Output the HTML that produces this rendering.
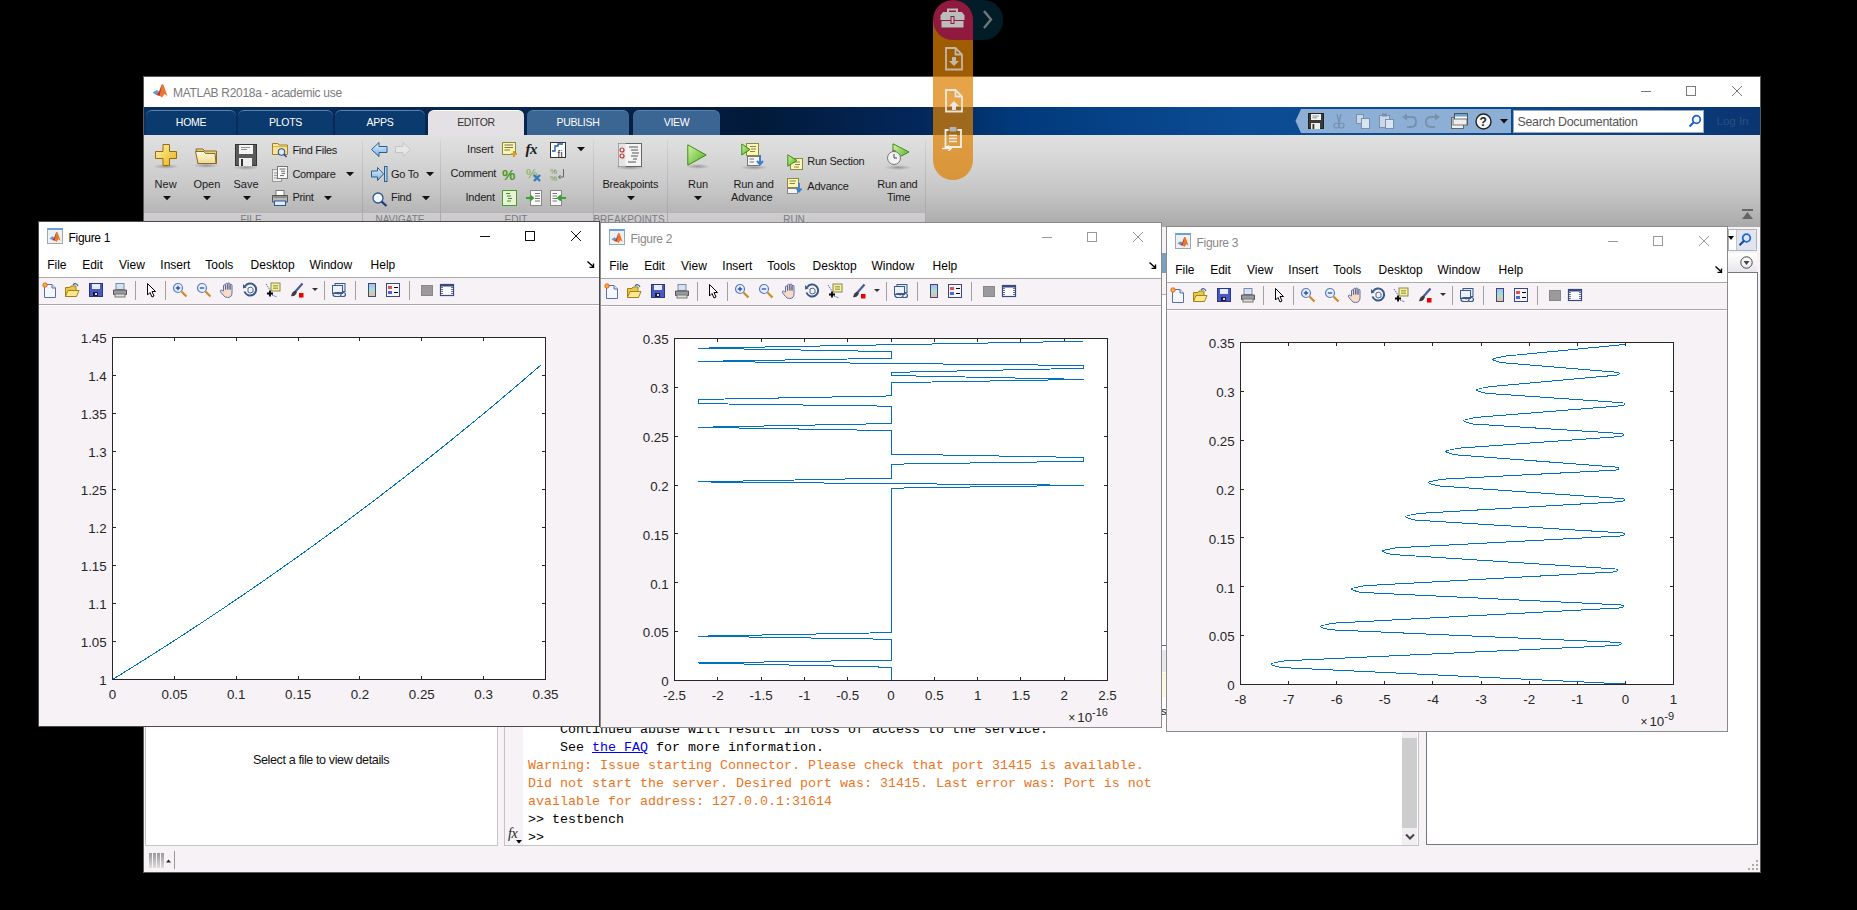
<!DOCTYPE html>
<html><head><meta charset="utf-8">
<style>
*{margin:0;padding:0;box-sizing:border-box}
html,body{width:1857px;height:910px;overflow:hidden;background:#000;font-family:"Liberation Sans",sans-serif;position:relative}
.a{position:absolute;display:block}
.t{position:absolute;white-space:pre;line-height:1}
</style></head><body>

<div class="a" style="left:143px;top:76px;width:1618px;height:797px;background:#f6f2f6;border:1px solid #5a5a5a"></div>
<div class="a" style="left:144px;top:77px;width:1616px;height:30px;background:#fff"></div>
<svg class="a" style="left:152px;top:83px" width="16" height="16" viewBox="0 0 16 16">
<path d="M0.5 9.5 L5 7 L7 8.5 L4 12 Z" fill="#5aa0d8"/>
<path d="M4 12 L7 8.5 L9.5 2 L11 1.5 L8 13 Z" fill="#c0392b"/>
<path d="M9.5 2 Q10.5 0.5 11.5 2 L15.5 13 L12.5 11 L10 14.5 L8 13 Z" fill="#e8762b"/>
</svg>
<div class="t" style="left:173.0px;top:86.8px;font-size:12px;color:#7a7a7a;font-family:'Liberation Sans';letter-spacing:-0.3px">MATLAB R2018a - academic use</div>
<div class="a" style="left:1641px;top:91px;width:10px;height:1px;background:#7a7a7a"></div>
<div class="a" style="left:1686px;top:86px;width:10px;height:10px;border:1px solid #7a7a7a"></div>
<svg class="a" style="left:1732px;top:86px;" width="10" height="10" viewBox="0 0 10 10"><path d="M0 0 L10 10 M10 0 L0 10" stroke="#7a7a7a" stroke-width="1"/></svg>
<div class="a" style="left:144px;top:107px;width:1616px;height:28px;background:linear-gradient(90deg,#0b2f5e 0%,#06244c 25%,#021a3a 38%,#03275a 48%,#013a7c 54%,#0c4c94 68%,#0b4a90 84%,#0a3a78 96%,#0a3570 100%)"></div>
<div class="a" style="left:146px;top:110px;width:90px;height:25px;background:#0b3a6e;border-radius:6px 6px 0 0;border-top:1px solid #5b82ad"></div>
<div class="t" style="left:191.0px;top:117.1px;font-size:10.5px;color:#fff;font-family:'Liberation Sans';transform:translateX(-50%);letter-spacing:-0.3px">HOME</div>
<div class="a" style="left:238px;top:110px;width:95px;height:25px;background:#0b3a6e;border-radius:6px 6px 0 0;border-top:1px solid #5b82ad"></div>
<div class="t" style="left:285.5px;top:117.1px;font-size:10.5px;color:#fff;font-family:'Liberation Sans';transform:translateX(-50%);letter-spacing:-0.3px">PLOTS</div>
<div class="a" style="left:335px;top:110px;width:90px;height:25px;background:#0b3a6e;border-radius:6px 6px 0 0;border-top:1px solid #5b82ad"></div>
<div class="t" style="left:380.0px;top:117.1px;font-size:10.5px;color:#fff;font-family:'Liberation Sans';transform:translateX(-50%);letter-spacing:-0.3px">APPS</div>
<div class="a" style="left:428px;top:110px;width:96px;height:25px;background:#e3e1e4;border-radius:6px 6px 0 0;border-top:1px solid #fff"></div>
<div class="t" style="left:476.0px;top:117.1px;font-size:10.5px;color:#333;font-family:'Liberation Sans';transform:translateX(-50%);letter-spacing:-0.3px">EDITOR</div>
<div class="a" style="left:527px;top:110px;width:102px;height:25px;background:#3b6593;border-radius:6px 6px 0 0;border-top:1px solid #5b82ad"></div>
<div class="t" style="left:578.0px;top:117.1px;font-size:10.5px;color:#fff;font-family:'Liberation Sans';transform:translateX(-50%);letter-spacing:-0.3px">PUBLISH</div>
<div class="a" style="left:633px;top:110px;width:87px;height:25px;background:#3b6593;border-radius:6px 6px 0 0;border-top:1px solid #5b82ad"></div>
<div class="t" style="left:676.5px;top:117.1px;font-size:10.5px;color:#fff;font-family:'Liberation Sans';transform:translateX(-50%);letter-spacing:-0.3px">VIEW</div>
<svg class="a" style="left:1295px;top:109px;" width="216" height="24" viewBox="0 0 216 24"><path d="M0.5 12 L6 0 L216 0 L216 24 L6 24 Z" fill="#8dafd6"/></svg>
<div class="a" style="left:1513px;top:110px;width:191px;height:23px;background:#fff;border:1px solid #9ab"></div>
<div class="t" style="left:1517.5px;top:116.3px;font-size:12.4px;color:#555;font-family:'Liberation Sans';letter-spacing:-0.3px">Search Documentation</div>
<svg class="a" style="left:1688px;top:114px;" width="14" height="14" viewBox="0 0 14 14"><circle cx="8.5" cy="5.5" r="3.8" fill="none" stroke="#1e64c8" stroke-width="1.8"/><path d="M6 8 L1.5 12.5" stroke="#1e64c8" stroke-width="2.2"/></svg>
<div class="t" style="left:1716.5px;top:116.3px;font-size:11.5px;color:#2b4f80;font-family:'Liberation Sans'">Log In</div>
<div class="a" style="left:144px;top:135px;width:1616px;height:92px;background:linear-gradient(180deg,#e2e1e2 0%,#d6d5d6 30%,#c7c6c7 60%,#b6b5b6 85%,#aaa9aa 100%)"></div>
<div class="a" style="left:144px;top:213px;width:781px;height:14px;background:linear-gradient(180deg,#cfcdd0,#c9c7ca)"></div>
<div class="a" style="left:362px;top:140px;width:1px;height:87px;background:linear-gradient(180deg,rgba(170,168,171,0.2),#a9a7aa)"></div>
<div class="a" style="left:440px;top:140px;width:1px;height:87px;background:linear-gradient(180deg,rgba(170,168,171,0.2),#a9a7aa)"></div>
<div class="a" style="left:593px;top:140px;width:1px;height:87px;background:linear-gradient(180deg,rgba(170,168,171,0.2),#a9a7aa)"></div>
<div class="a" style="left:667px;top:140px;width:1px;height:87px;background:linear-gradient(180deg,rgba(170,168,171,0.2),#a9a7aa)"></div>
<div class="a" style="left:925px;top:140px;width:1px;height:87px;background:linear-gradient(180deg,rgba(170,168,171,0.2),#a9a7aa)"></div>
<div class="t" style="left:251.0px;top:215.0px;font-size:10px;color:#7b7b80;font-family:'Liberation Sans';transform:translateX(-50%)">FILE</div>
<div class="t" style="left:400.0px;top:215.0px;font-size:10px;color:#7b7b80;font-family:'Liberation Sans';transform:translateX(-50%)">NAVIGATE</div>
<div class="t" style="left:516.0px;top:215.0px;font-size:10px;color:#7b7b80;font-family:'Liberation Sans';transform:translateX(-50%)">EDIT</div>
<div class="t" style="left:629.0px;top:215.0px;font-size:10px;color:#7b7b80;font-family:'Liberation Sans';transform:translateX(-50%)">BREAKPOINTS</div>
<div class="t" style="left:794.0px;top:215.0px;font-size:10px;color:#7b7b80;font-family:'Liberation Sans';transform:translateX(-50%)">RUN</div>
<div class="a" style="left:1742px;top:209px;width:11px;height:1.5px;background:#666"></div>
<svg class="a" style="left:1742px;top:211px;" width="11" height="8" viewBox="0 0 11 8"><path d="M0 8 L5.5 1 L11 8 Z" fill="#666"/></svg>
<div class="a" style="left:153px;top:164px;width:26px;height:5px;border-radius:50%;background:radial-gradient(ellipse at center,rgba(80,80,80,0.45),rgba(80,80,80,0) 70%)"></div>
<svg class="a" style="left:155px;top:144px;" width="23" height="23" viewBox="0 0 23 23"><defs><linearGradient id="gy" x1="0" y1="0" x2="1" y2="1"><stop offset="0" stop-color="#fff6b0"/><stop offset="1" stop-color="#e8b010"/></linearGradient></defs><path d="M8 0.5 H14.5 V7.5 H21.5 V14.5 H14.5 V21.5 H8 V14.5 H0.5 V7.5 H8 Z" fill="url(#gy)" stroke="#9a6a10" stroke-width="1"/></svg>
<div class="t" style="left:154.6px;top:178.7px;font-size:11px;color:#1b1b1b;font-family:'Liberation Sans'">New</div>
<svg class="a" style="left:163.3px;top:196px;" width="8" height="5" viewBox="0 0 8 5"><path d="M0 0 H8 L4 4.2 Z" fill="#111"/></svg>
<div class="a" style="left:193px;top:163px;width:26px;height:5px;border-radius:50%;background:radial-gradient(ellipse at center,rgba(80,80,80,0.45),rgba(80,80,80,0) 70%)"></div>
<svg class="a" style="left:195px;top:148px;" width="23" height="17" viewBox="0 0 23 17"><defs><linearGradient id="gf" x1="0" y1="0" x2="0" y2="1"><stop offset="0" stop-color="#fffbe0"/><stop offset="1" stop-color="#f0d890"/></linearGradient></defs><path d="M1 1 H8 L9.5 3 H21.5 V15.5 H3 Z" fill="#e8cf80" stroke="#8a6a20"/><path d="M0.5 3.5 H9 L10.5 5.5 H20 L21 15.5 H3 Z" fill="url(#gf)" stroke="#8a6a20"/></svg>
<div class="t" style="left:193.4px;top:178.7px;font-size:11px;color:#1b1b1b;font-family:'Liberation Sans'">Open</div>
<svg class="a" style="left:203.3px;top:196px;" width="8" height="5" viewBox="0 0 8 5"><path d="M0 0 H8 L4 4.2 Z" fill="#111"/></svg>
<div class="a" style="left:233px;top:165px;width:26px;height:5px;border-radius:50%;background:radial-gradient(ellipse at center,rgba(80,80,80,0.45),rgba(80,80,80,0) 70%)"></div>
<svg class="a" style="left:235px;top:144px;" width="22" height="22" viewBox="0 0 22 22"><rect x="0.5" y="0.5" width="21" height="21" fill="#5a5a5a" stroke="#333"/><rect x="4" y="1" width="14" height="9" fill="#f4f4f4"/><path d="M6 3.5 H15 M6 5.5 H12" stroke="#777" stroke-width="0.8"/><rect x="4" y="14" width="13" height="8" fill="#eee"/><rect x="6" y="15" width="2" height="7" fill="#333"/></svg>
<div class="t" style="left:233.5px;top:178.7px;font-size:11px;color:#1b1b1b;font-family:'Liberation Sans'">Save</div>
<svg class="a" style="left:243px;top:196px;" width="8" height="5" viewBox="0 0 8 5"><path d="M0 0 H8 L4 4.2 Z" fill="#111"/></svg>
<svg class="a" style="left:272px;top:142px;" width="16" height="16" viewBox="0 0 16 16"><path d="M0.5 1.5 H6 L7 3 H15.5 V12.5 H0.5 Z" fill="#f6e4a0" stroke="#a8821e"/><rect x="1" y="4" width="14" height="1.2" fill="#e0b840"/><circle cx="9.5" cy="10" r="3.2" fill="#dfe8f8" stroke="#2a5a90" stroke-width="1.1"/><path d="M11.8 12.3 L14.5 15" stroke="#2a4a80" stroke-width="1.6"/></svg>
<div class="t" style="left:292.4px;top:144.6px;font-size:11px;color:#1b1b1b;font-family:'Liberation Sans';letter-spacing:-0.3px">Find Files</div>
<svg class="a" style="left:272px;top:166px;" width="16" height="16" viewBox="0 0 16 16"><rect x="0.5" y="3.5" width="9" height="12" fill="#ececec" stroke="#999"/><path d="M2 7 H6 M2 9.5 H5 M2 12 H6" stroke="#777" stroke-width="0.7"/><rect x="5.5" y="0.5" width="10" height="12" fill="#fbfbfb" stroke="#777"/><path d="M7.5 3 H13.5 M9 5.2 H13 M9.5 7.4 H13 M8 9.6 H12" stroke="#444" stroke-width="0.8"/></svg>
<div class="t" style="left:292.4px;top:168.5px;font-size:11px;color:#1b1b1b;font-family:'Liberation Sans';letter-spacing:-0.3px">Compare</div>
<svg class="a" style="left:346px;top:172px;" width="8" height="5" viewBox="0 0 8 5"><path d="M0 0 H8 L4 4.2 Z" fill="#111"/></svg>
<svg class="a" style="left:272px;top:190px;" width="16" height="16" viewBox="0 0 16 16"><rect x="4" y="0.5" width="8" height="5" fill="#fff" stroke="#777"/><path d="M0.5 5.5 H15.5 V12 H0.5 Z" fill="#b8b8b8" stroke="#555"/><rect x="1.5" y="6" width="13" height="2" fill="#8a8a8a"/><rect x="2.5" y="11" width="11" height="4.5" fill="#e0ecf8" stroke="#2a5a90"/></svg>
<div class="t" style="left:292.4px;top:192.3px;font-size:11px;color:#1b1b1b;font-family:'Liberation Sans';letter-spacing:-0.3px">Print</div>
<svg class="a" style="left:323.6px;top:196px;" width="8" height="5" viewBox="0 0 8 5"><path d="M0 0 H8 L4 4.2 Z" fill="#111"/></svg>
<svg class="a" style="left:371px;top:142px;" width="17" height="15" viewBox="0 0 17 15"><defs><linearGradient id="gb" x1="0" y1="0" x2="0" y2="1"><stop offset="0" stop-color="#e4f0fc"/><stop offset="1" stop-color="#7ab0e0"/></linearGradient></defs><path d="M0.5 7.5 L8 0.5 V4.5 H16 V10.5 H8 V14.5 Z" fill="url(#gb)" stroke="#2a5f8a"/></svg>
<svg class="a" style="left:395px;top:142px;" width="16" height="15" viewBox="0 0 16 15"><path d="M15.5 7.5 L8 0.5 V4.5 H0.5 V10.5 H8 V14.5 Z" fill="#e6e6e6" stroke="#c4c4c4"/></svg>
<svg class="a" style="left:371px;top:166px;" width="17" height="16" viewBox="0 0 17 16"><path d="M12.5 8 L6.5 1.5 V5 H0.5 V11 H6.5 V14.5 Z" fill="url(#gb)" stroke="#2a5f8a"/><rect x="13.5" y="0.5" width="2.5" height="15" fill="#b8d4f0" stroke="#2a5f8a"/></svg>
<div class="t" style="left:391.0px;top:168.5px;font-size:11px;color:#1b1b1b;font-family:'Liberation Sans';letter-spacing:-0.3px">Go To</div>
<svg class="a" style="left:426px;top:172px;" width="8" height="5" viewBox="0 0 8 5"><path d="M0 0 H8 L4 4.2 Z" fill="#111"/></svg>
<svg class="a" style="left:372px;top:192px;" width="16" height="15" viewBox="0 0 16 15"><circle cx="6" cy="6" r="5" fill="#f0f4fa" stroke="#2a5a8a" stroke-width="1.3"/><path d="M9.5 9.5 L14.5 14" stroke="#1a3a6a" stroke-width="2.2"/></svg>
<div class="t" style="left:391.0px;top:192.3px;font-size:11px;color:#1b1b1b;font-family:'Liberation Sans';letter-spacing:-0.3px">Find</div>
<svg class="a" style="left:421.7px;top:196px;" width="8" height="5" viewBox="0 0 8 5"><path d="M0 0 H8 L4 4.2 Z" fill="#111"/></svg>
<div class="t" style="left:467.1px;top:143.5px;font-size:11px;color:#1b1b1b;font-family:'Liberation Sans';letter-spacing:-0.2px">Insert</div>
<div class="t" style="left:450.5px;top:167.7px;font-size:11px;color:#1b1b1b;font-family:'Liberation Sans';letter-spacing:-0.3px">Comment</div>
<div class="t" style="left:465.5px;top:191.9px;font-size:11px;color:#1b1b1b;font-family:'Liberation Sans';letter-spacing:-0.2px">Indent</div>
<svg class="a" style="left:502px;top:142px;" width="16" height="16" viewBox="0 0 16 16"><rect x="0.5" y="0.5" width="13" height="12" fill="#fbf5b8" stroke="#8a8a40"/><path d="M2.5 3 H11 M2.5 5.5 H11 M2.5 8 H8" stroke="#6a6a30" stroke-width="0.9"/><path d="M12 9 V15 M9 12 H15" stroke="#d8a020" stroke-width="2.2"/></svg>
<svg class="a" style="left:525px;top:141px;" width="18" height="17" viewBox="0 0 18 17"><text x="0.5" y="13" font-family="Liberation Serif" font-style="italic" font-weight="bold" font-size="15" fill="#1a1a1a" letter-spacing="-0.5">fx</text></svg>
<svg class="a" style="left:550px;top:142px;" width="16" height="16" viewBox="0 0 16 16"><rect x="0.5" y="0.5" width="15" height="15" fill="#fff" stroke="#333"/><path d="M2 9 H5 V4 H8 V2 H13" fill="none" stroke="#1a5ab0" stroke-width="1.3"/><text x="7.5" y="14.5" font-family="Liberation Sans" font-size="9.5" fill="#111" letter-spacing="0.3" style="font-variant-ligatures:none">fi</text></svg>
<svg class="a" style="left:577px;top:147px;" width="8" height="5" viewBox="0 0 8 5"><path d="M0 0 H8 L4 4.2 Z" fill="#111"/></svg>
<svg class="a" style="left:502px;top:166px;" width="16" height="16" viewBox="0 0 16 16"><text x="0" y="13.5" font-family="Liberation Sans" font-size="15" font-weight="bold" fill="#4a9a20">%</text></svg>
<svg class="a" style="left:526px;top:166px;" width="16" height="16" viewBox="0 0 16 16"><text x="0" y="12" font-family="Liberation Sans" font-size="13" fill="#7ab050">%</text><path d="M8 9 L14 15 M14 9 L8 15" stroke="#3a7ac0" stroke-width="2.4"/></svg>
<svg class="a" style="left:550px;top:166px;" width="16" height="16" viewBox="0 0 16 16"><text x="0" y="8" font-family="Liberation Sans" font-size="8" fill="#6a9a40">%</text><text x="0" y="15" font-family="Liberation Sans" font-size="8" fill="#6a9a40">%</text><path d="M13.5 3 V11 H9 M10.5 9 L8.5 11 L10.5 13" fill="none" stroke="#666" stroke-width="1"/></svg>
<svg class="a" style="left:502px;top:190px;" width="16" height="16" viewBox="0 0 16 16"><rect x="0.5" y="0.5" width="14" height="15" fill="#e8f4d8" stroke="#4a9a30"/><path d="M4 3.5 H8 M5 6 H9 M6 8.5 H10 M5 11 H9" stroke="#3a7a20" stroke-width="0.9"/></svg>
<svg class="a" style="left:526px;top:190px;" width="16" height="16" viewBox="0 0 16 16"><rect x="4.5" y="0.5" width="11" height="15" fill="#fafafa" stroke="#888"/><path d="M9 3.5 H14 M9 6 H14 M9 8.5 H14 M9 11 H14" stroke="#555" stroke-width="0.8"/><path d="M0 8 H6 M4 5.5 L7 8 L4 10.5" fill="none" stroke="#3aa030" stroke-width="2"/></svg>
<svg class="a" style="left:550px;top:190px;" width="16" height="16" viewBox="0 0 16 16"><rect x="0.5" y="0.5" width="11" height="15" fill="#fafafa" stroke="#888"/><path d="M2.5 3.5 H7 M2.5 6 H7 M2.5 8.5 H7 M2.5 11 H7" stroke="#555" stroke-width="0.8"/><path d="M16 8 H9 M11 5.5 L8 8 L11 10.5" fill="none" stroke="#3aa030" stroke-width="2"/></svg>
<div class="a" style="left:615px;top:165px;width:30px;height:5px;border-radius:50%;background:radial-gradient(ellipse at center,rgba(80,80,80,0.45),rgba(80,80,80,0) 70%)"></div>
<svg class="a" style="left:618px;top:143px;" width="24" height="24" viewBox="0 0 24 24"><rect x="0.5" y="0.5" width="23" height="23" fill="#f4f4f4" stroke="#666"/><rect x="0.5" y="0.5" width="7" height="23" fill="#e4e4e4" stroke="none"/><circle cx="4" cy="7" r="2" fill="#fff" stroke="#d03030" stroke-width="1.2"/><circle cx="4" cy="13" r="2" fill="#fff" stroke="#d03030" stroke-width="1.2"/><path d="M11 4 H20 M13 7 H20 M14 10 H21 M13 13 H20 M15 16 H19 M10 19 H18" stroke="#444" stroke-width="0.9"/></svg>
<div class="t" style="left:602.4px;top:179.0px;font-size:11px;color:#1b1b1b;font-family:'Liberation Sans';letter-spacing:-0.2px">Breakpoints</div>
<svg class="a" style="left:627px;top:196px;" width="8" height="5" viewBox="0 0 8 5"><path d="M0 0 H8 L4 4.2 Z" fill="#111"/></svg>
<div class="a" style="left:686px;top:164px;width:24px;height:5px;border-radius:50%;background:radial-gradient(ellipse at center,rgba(80,80,80,0.45),rgba(80,80,80,0) 70%)"></div>
<svg class="a" style="left:687px;top:144px;" width="20" height="22" viewBox="0 0 20 22"><defs><linearGradient id="gg" x1="0" y1="0" x2="1" y2="1"><stop offset="0" stop-color="#d8f4a0"/><stop offset="1" stop-color="#48b020"/></linearGradient></defs><path d="M0.8 0.8 L19.2 11 L0.8 21.2 Z" fill="url(#gg)" stroke="#3a8a18"/></svg>
<div class="t" style="left:688.0px;top:178.7px;font-size:11px;color:#1b1b1b;font-family:'Liberation Sans'">Run</div>
<svg class="a" style="left:694px;top:196px;" width="8" height="5" viewBox="0 0 8 5"><path d="M0 0 H8 L4 4.2 Z" fill="#111"/></svg>
<div class="a" style="left:740px;top:165px;width:28px;height:5px;border-radius:50%;background:radial-gradient(ellipse at center,rgba(80,80,80,0.45),rgba(80,80,80,0) 70%)"></div>
<svg class="a" style="left:741px;top:143px;" width="25" height="24" viewBox="0 0 25 24"><rect x="5.5" y="0.5" width="12" height="12" fill="#fbf5b8" stroke="#8a8a40"/><path d="M9 3.5 H15 M10 6 H15 M9 8.5 H14" stroke="#6a6a30" stroke-width="0.8"/><path d="M0.8 1 L9 6.5 L0.8 12 Z" fill="url(#gg)" stroke="#3a8a18"/><rect x="6.5" y="13.5" width="12" height="9" fill="#f6f6f6" stroke="#777"/><path d="M8.5 16 H13 M8.5 19 H13" stroke="#555" stroke-width="0.8"/><path d="M19 12 V21 M16 18 L19 21.5 L22 18" fill="none" stroke="#3a80d0" stroke-width="2"/></svg>
<div class="t" style="left:733.5px;top:178.7px;font-size:11px;color:#1b1b1b;font-family:'Liberation Sans';letter-spacing:-0.2px">Run and</div>
<div class="t" style="left:731.0px;top:192.4px;font-size:11px;color:#1b1b1b;font-family:'Liberation Sans';letter-spacing:-0.2px">Advance</div>
<svg class="a" style="left:787px;top:154px;" width="16" height="16" viewBox="0 0 16 16"><rect x="3.5" y="4.5" width="12" height="11" fill="#fbf5b8" stroke="#8a8a40"/><path d="M7 8 H13 M8 10.5 H13 M7 13 H12" stroke="#6a6a30" stroke-width="0.8"/><path d="M0.8 0.8 L10 6.5 L0.8 12.2 Z" fill="url(#gg)" stroke="#3a8a18"/></svg>
<div class="t" style="left:807.3px;top:156.4px;font-size:11px;color:#1b1b1b;font-family:'Liberation Sans';letter-spacing:-0.25px">Run Section</div>
<svg class="a" style="left:787px;top:178px;" width="16" height="16" viewBox="0 0 16 16"><rect x="0.5" y="0.5" width="11" height="9" fill="#fbf5b8" stroke="#8a8a40"/><path d="M2.5 3 H9 M2.5 5.5 H8" stroke="#6a6a30" stroke-width="0.8"/><rect x="0.5" y="10.5" width="10" height="5" fill="#f4f4f4" stroke="#888"/><path d="M12 5 V13 M9.5 10.5 L12 13.5 L14.5 10.5" fill="none" stroke="#3a80d0" stroke-width="1.8"/></svg>
<div class="t" style="left:807.3px;top:180.7px;font-size:11px;color:#1b1b1b;font-family:'Liberation Sans';letter-spacing:-0.2px">Advance</div>
<div class="a" style="left:884px;top:165px;width:28px;height:5px;border-radius:50%;background:radial-gradient(ellipse at center,rgba(80,80,80,0.45),rgba(80,80,80,0) 70%)"></div>
<svg class="a" style="left:886px;top:143px;" width="24" height="24" viewBox="0 0 24 24"><path d="M7 0.8 L23 9 L7 17.2 Z" fill="url(#gg)" stroke="#3a8a18"/><circle cx="8" cy="15" r="6.5" fill="#f2f2f2" stroke="#777" stroke-width="1"/><path d="M8 11 V15 H11" fill="none" stroke="#444" stroke-width="1"/><rect x="6.5" y="7" width="3" height="2" fill="#777"/></svg>
<div class="t" style="left:877.3px;top:178.7px;font-size:11px;color:#1b1b1b;font-family:'Liberation Sans';letter-spacing:-0.2px">Run and</div>
<div class="t" style="left:887.0px;top:192.4px;font-size:11px;color:#1b1b1b;font-family:'Liberation Sans';letter-spacing:-0.2px">Time</div>
<svg class="a" style="left:1308px;top:113px;" width="16" height="16" viewBox="0 0 16 16"><rect x="0.5" y="0.5" width="15" height="15" fill="#3a3a3a" stroke="#222"/><rect x="3" y="1" width="10" height="6" fill="#f4f4f4"/><path d="M4.5 3 H11 M4.5 4.8 H9" stroke="#666" stroke-width="0.7"/><rect x="3" y="10" width="9" height="6" fill="#eee"/><rect x="4.5" y="11" width="1.8" height="5" fill="#333"/></svg>
<svg class="a" style="left:1331px;top:113px;" width="16" height="16" viewBox="0 0 16 16"><path d="M6 1 L8 10 M10 1 L8 10" stroke="#7890aa" stroke-width="1.2"/><circle cx="5.5" cy="12.5" r="2.5" fill="none" stroke="#7890aa" stroke-width="1.2"/><circle cx="10.5" cy="12.5" r="2.5" fill="none" stroke="#7890aa" stroke-width="1.2"/></svg>
<svg class="a" style="left:1355px;top:113px;" width="16" height="16" viewBox="0 0 16 16"><rect x="1.5" y="1.5" width="7" height="9" fill="#c8d8e8" stroke="#7890aa"/><rect x="6.5" y="5.5" width="8" height="10" fill="#d8e4f0" stroke="#7890aa"/></svg>
<svg class="a" style="left:1378px;top:113px;" width="17" height="16" viewBox="0 0 17 16"><rect x="1.5" y="2.5" width="10" height="12" fill="#c8d8e8" stroke="#7890aa"/><rect x="4" y="0.5" width="5" height="3" fill="#7890aa"/><rect x="7.5" y="6.5" width="8" height="9" fill="#d8e4f0" stroke="#7890aa"/></svg>
<svg class="a" style="left:1401px;top:113px;" width="17" height="16" viewBox="0 0 17 16"><path d="M5 4 H11 Q15 4 15 9 Q15 14 10 14 H6" fill="none" stroke="#7890aa" stroke-width="1.8"/><path d="M1 4 L6 0.5 V7.5 Z" fill="#7890aa"/></svg>
<svg class="a" style="left:1424px;top:113px;" width="17" height="16" viewBox="0 0 17 16"><path d="M12 4 H6 Q2 4 2 9 Q2 14 7 14 H11" fill="none" stroke="#7890aa" stroke-width="1.8"/><path d="M16 4 L11 0.5 V7.5 Z" fill="#7890aa"/></svg>
<svg class="a" style="left:1451px;top:113px;" width="17" height="16" viewBox="0 0 17 16"><rect x="0.5" y="4.5" width="12" height="11" fill="#f0f0f0" stroke="#666"/><rect x="3.5" y="0.5" width="13" height="11" fill="#fafafa" stroke="#555"/><rect x="4" y="1" width="12" height="2.5" fill="#6aa0d8"/><rect x="2" y="6" width="14" height="6" fill="#eee" stroke="#555" stroke-width="0.8"/></svg>
<svg class="a" style="left:1475px;top:113px;" width="17" height="17" viewBox="0 0 17 17"><circle cx="8.5" cy="8.5" r="7.5" fill="#f4f6fa" stroke="#222" stroke-width="1.4"/><text x="4.5" y="13" font-family="Liberation Sans" font-weight="bold" font-size="12" fill="#222">?</text></svg>
<svg class="a" style="left:1500px;top:119px;" width="8" height="5" viewBox="0 0 8 5"><path d="M0 0 H8 L4 4.5 Z" fill="#111"/></svg>
<div class="a" style="left:145px;top:600px;width:353px;height:246px;background:#fff;border:1px solid #c4c4c6"></div>
<div class="t" style="left:253.0px;top:754.1px;font-size:12.6px;color:#111;font-family:'Liberation Sans';letter-spacing:-0.4px">Select a file to view details</div>
<div class="a" style="left:504px;top:600px;width:915px;height:246px;background:#fff;border:1px solid #c4c4c6"></div>
<div class="a" style="left:505px;top:600px;width:18px;height:245px;background:#f6f2f6"></div>
<div class="a" style="left:1402px;top:732px;width:15px;height:113px;background:#f0eef1"></div>
<div class="a" style="left:1402px;top:738px;width:15px;height:90px;background:#cdcdcd"></div>
<svg class="a" style="left:1405px;top:833px;" width="10" height="8" viewBox="0 0 10 8"><path d="M1 1.5 L5 5.5 L9 1.5" fill="none" stroke="#444" stroke-width="2"/></svg>
<div class="a" style="left:1426px;top:272px;width:332px;height:573px;background:#fff;border:1px solid #76767e"></div>
<svg class="a" style="left:148px;top:853px;" width="24" height="16" viewBox="0 0 24 16"><defs><linearGradient id="sb" x1="0" y1="0" x2="0" y2="1"><stop offset="0" stop-color="#999"/><stop offset="1" stop-color="#ddd"/></linearGradient></defs><rect x="1" y="0" width="3" height="15" fill="url(#sb)"/><rect x="5" y="0" width="3" height="15" fill="url(#sb)"/><rect x="9" y="0" width="3" height="15" fill="url(#sb)"/><rect x="13" y="0" width="3" height="15" fill="url(#sb)"/><path d="M18 9.5 L20.5 6.5 L23 9.5 Z" fill="#222"/></svg>
<div class="a" style="left:174px;top:851px;width:1px;height:18px;background:#999"></div>
<div class="a" style="left:1756px;top:860px;width:2px;height:2px;background:#a9a99c"></div>
<div class="a" style="left:1752px;top:864px;width:2px;height:2px;background:#a9a99c"></div>
<div class="a" style="left:1756px;top:864px;width:2px;height:2px;background:#a9a99c"></div>
<div class="a" style="left:1748px;top:868px;width:2px;height:2px;background:#a9a99c"></div>
<div class="a" style="left:1752px;top:868px;width:2px;height:2px;background:#a9a99c"></div>
<div class="a" style="left:1756px;top:868px;width:2px;height:2px;background:#a9a99c"></div>
<div class="t" style="left:528.0px;top:722.7px;font-size:13.33px;color:#000;font-family:'Liberation Mono'">    Continued abuse will result in loss of access to the service.</div>
<div class="t" style="left:528px;top:740.7px;font-size:13.33px;font-family:'Liberation Mono';color:#000">    See <span style="color:#0000ee;text-decoration:underline">the FAQ</span> for more information.</div>
<div class="t" style="left:528.0px;top:758.7px;font-size:13.33px;color:#ec7422;font-family:'Liberation Mono'">Warning: Issue starting Connector. Please check that port 31415 is available.</div>
<div class="t" style="left:528.0px;top:776.7px;font-size:13.33px;color:#ec7422;font-family:'Liberation Mono'">Did not start the server. Desired port was: 31415. Last error was: Port is not</div>
<div class="t" style="left:528.0px;top:794.7px;font-size:13.33px;color:#ec7422;font-family:'Liberation Mono'">available for address: 127.0.0.1:31614</div>
<div class="t" style="left:528.0px;top:812.7px;font-size:13.33px;color:#000;font-family:'Liberation Mono'">&gt;&gt; testbench</div>
<div class="t" style="left:528.0px;top:830.7px;font-size:13.33px;color:#000;font-family:'Liberation Mono'">&gt;&gt;</div>
<div class="t" style="left:508.0px;top:827.1px;font-size:14px;color:#222;font-family:'Liberation Serif';font-style:italic;letter-spacing:-0.5px">fx</div>
<svg class="a" style="left:516px;top:840px;" width="6" height="4" viewBox="0 0 6 4"><path d="M0 0 L6 0 L3 3.5 Z" fill="#000"/></svg>
<div class="a" style="left:1162px;top:227px;width:4px;height:505px;background:#fff"></div>
<div class="a" style="left:1162px;top:227px;width:4px;height:67px;background:#f6f2f6"></div>
<div class="a" style="left:1162px;top:253px;width:4px;height:20px;background:#7d9ec4"></div>
<div class="a" style="left:1162px;top:294px;width:4px;height:1px;background:#b0b0b0"></div>
<div class="a" style="left:1162px;top:645px;width:4px;height:1px;background:#3a6aa8"></div>
<div class="a" style="left:1162px;top:650px;width:4px;height:22px;background:#e8e8ea"></div>
<div class="a" style="left:1162px;top:673px;width:4px;height:24px;background:#fbf8e0"></div>
<div class="a" style="left:1162px;top:700px;width:4px;height:20px;overflow:hidden"><div class="t" style="left:-1px;top:6px;font-size:11px;color:#111">s</div></div>
<div class="a" style="left:1728px;top:229px;width:29px;height:22px;background:#fff;border:1px solid #b0b0b8"></div>
<div class="a" style="left:1736px;top:230px;width:20px;height:20px;background:#dfe4f0;border-left:1px solid #c0c4d0;border-radius:0 3px 3px 0"></div>
<svg class="a" style="left:1737px;top:232px;" width="16" height="16" viewBox="0 0 16 16"><circle cx="9.5" cy="6" r="3.8" fill="none" stroke="#1e6ad0" stroke-width="1.8"/><path d="M7 8.8 L2.5 13.2" stroke="#1e4a90" stroke-width="2.2"/></svg>
<svg class="a" style="left:1728px;top:236px;" width="6" height="5" viewBox="0 0 6 5"><path d="M0 0 H6 L3 4 Z" fill="#000"/></svg>
<div class="a" style="left:1728px;top:253px;width:29px;height:19px;background:linear-gradient(180deg,#fff,#e8e6ea)"></div>
<svg class="a" style="left:1740px;top:256px;" width="13" height="13" viewBox="0 0 13 13"><circle cx="6.5" cy="6.5" r="5.7" fill="none" stroke="#444" stroke-width="1"/><path d="M3.5 5 H9.5 L6.5 9 Z" fill="#444"/></svg>
<div class="a" style="left:600px;top:222px;width:562px;height:506px;background:#f6f2f6;border:1px solid #8a8a8a"></div>
<div class="a" style="left:601px;top:223px;width:560px;height:55px;background:#fff"></div>
<div class="a" style="left:601px;top:278px;width:560px;height:1px;background:#a8a8a8"></div>
<div class="a" style="left:601px;top:305px;width:560px;height:1px;background:#a8a8a8"></div>
<div class="a" style="left:601px;top:306px;width:560px;height:1px;background:#fff"></div>
<div class="a" style="left:609px;top:229px;width:16px;height:16px;background:#eef0f4;border:1px solid #9aa;border-top:2px solid #6aa0d8"></div>
<svg class="a" style="left:611px;top:232px" width="12" height="12" viewBox="0 0 16 16">
<path d="M0.5 9.5 L5 7 L7 8.5 L4 12 Z" fill="#5aa0d8"/>
<path d="M4 12 L7 8.5 L9.5 2 L11 1.5 L8 13 Z" fill="#c0392b"/>
<path d="M9.5 2 Q10.5 0.5 11.5 2 L15.5 13 L12.5 11 L10 14.5 L8 13 Z" fill="#e8762b"/>
</svg>
<div class="t" style="left:630.5px;top:232.6px;font-size:12px;color:#888;font-family:'Liberation Sans';letter-spacing:-0.3px">Figure 2</div>
<div class="a" style="left:1042px;top:237px;width:10px;height:1px;background:#999"></div>
<div class="a" style="left:1087px;top:232px;width:10px;height:10px;border:1px solid #999"></div>
<svg class="a" style="left:1133px;top:232px;" width="10" height="10" viewBox="0 0 10 10"><path d="M0 0 L10 10 M10 0 L0 10" stroke="#999" stroke-width="1"/></svg>
<div class="t" style="left:609.2px;top:259.6px;font-size:12px;color:#000;font-family:'Liberation Sans'">File</div>
<div class="t" style="left:644.2px;top:259.6px;font-size:12px;color:#000;font-family:'Liberation Sans'">Edit</div>
<div class="t" style="left:681.0px;top:259.6px;font-size:12px;color:#000;font-family:'Liberation Sans'">View</div>
<div class="t" style="left:722.3px;top:259.6px;font-size:12px;color:#000;font-family:'Liberation Sans'">Insert</div>
<div class="t" style="left:767.3px;top:259.6px;font-size:12px;color:#000;font-family:'Liberation Sans'">Tools</div>
<div class="t" style="left:812.6px;top:259.6px;font-size:12px;color:#000;font-family:'Liberation Sans'">Desktop</div>
<div class="t" style="left:871.4px;top:259.6px;font-size:12px;color:#000;font-family:'Liberation Sans'">Window</div>
<div class="t" style="left:932.6px;top:259.6px;font-size:12px;color:#000;font-family:'Liberation Sans'">Help</div>
<svg class="a" style="left:1149px;top:262px;" width="8" height="7" viewBox="0 0 8 7"><path d="M0.5 0.5 L6.5 6 M6.5 2.5 V6.5 H2.5" stroke="#000" stroke-width="1.4" fill="none"/></svg>
<svg class="a" style="left:604px;top:283px;" width="16" height="16" viewBox="0 0 16 16"><path d="M2.5 2.5 H10 L13.5 6 V15.5 H2.5 Z" fill="#f4f8ff" stroke="#5a6ea8"/><path d="M10 2.5 V6 H13.5" fill="#dfe6f5" stroke="#5a6ea8"/><circle cx="3" cy="3" r="2.2" fill="#ffb030" stroke="#e05010" stroke-width="0.8"/></svg>
<svg class="a" style="left:626px;top:283px;" width="16" height="16" viewBox="0 0 16 16"><path d="M1.5 5.5 H6 L7 4 H12 V14.5 H1.5 Z" fill="#e8c848" stroke="#a88018"/><path d="M1.5 14.5 L4 8.5 H15 L12.5 14.5 Z" fill="#fce890" stroke="#a88018"/><path d="M9 3 Q12 0 14 4" fill="none" stroke="#3060a0" stroke-width="1.2"/></svg>
<svg class="a" style="left:650px;top:283px;" width="16" height="16" viewBox="0 0 16 16"><rect x="1.5" y="1.5" width="13" height="13" fill="#4a58c0" stroke="#2a3488"/><rect x="4" y="2" width="8" height="5" fill="#e8ecff"/><rect x="5" y="10" width="5" height="4" fill="#1a1a3a"/><rect x="7" y="11" width="2" height="2" fill="#ddd"/></svg>
<svg class="a" style="left:674px;top:283px;" width="16" height="16" viewBox="0 0 16 16"><rect x="4" y="1.5" width="8" height="6" fill="#cfe4f8" stroke="#889"/><path d="M1.5 8 H14.5 V12.5 H1.5 Z" fill="#9a9a9a" stroke="#555"/><rect x="3" y="12" width="10" height="3" fill="#ddd" stroke="#777"/></svg>
<div class="a" style="left:697px;top:282px;width:1px;height:19px;background:#a0a0a0"></div>
<svg class="a" style="left:705px;top:283px;" width="16" height="16" viewBox="0 0 16 16"><path d="M4.5 1.5 V13 L7 10.5 L9 15 L11 14 L9 9.5 H12.5 Z" fill="#fff" stroke="#000" stroke-width="1"/></svg>
<div class="a" style="left:727px;top:282px;width:1px;height:19px;background:#a0a0a0"></div>
<svg class="a" style="left:734px;top:283px;" width="16" height="16" viewBox="0 0 16 16"><circle cx="6" cy="6" r="4.5" fill="#e6f0ff" stroke="#5a7ac8" stroke-width="1.2"/><path d="M3.8 6 H8.2 M6 3.8 V8.2" stroke="#3050a0" stroke-width="1.3"/><path d="M9.5 9.5 L14.5 14.5" stroke="#d08a20" stroke-width="2.2"/></svg>
<svg class="a" style="left:758px;top:283px;" width="16" height="16" viewBox="0 0 16 16"><circle cx="6" cy="6" r="4.5" fill="#e6f0ff" stroke="#5a7ac8" stroke-width="1.2"/><path d="M3.8 6 H8.2" stroke="#3050a0" stroke-width="1.3"/><path d="M9.5 9.5 L14.5 14.5" stroke="#d08a20" stroke-width="2.2"/></svg>
<svg class="a" style="left:781px;top:283px;" width="16" height="16" viewBox="0 0 16 16"><path d="M4.5 9 V4 Q4.5 2.8 5.6 2.8 Q6.6 2.8 6.6 4 V7.5 V2.5 Q6.6 1.2 7.7 1.2 Q8.8 1.2 8.8 2.5 V7.5 V2.2 Q8.8 1 9.9 1 Q11 1 11 2.2 V7.5 V3.5 Q11 2.4 12 2.4 Q13 2.4 13 3.5 V10.5 Q13 15.5 8.5 15.5 Q6 15.5 4.5 13.5 L1.5 9.8 Q0.8 8.8 1.8 8.2 Q2.8 7.8 3.6 8.8 Z" fill="#f6dcc4" stroke="#5060a0" stroke-width="0.9"/></svg>
<svg class="a" style="left:804px;top:283px;" width="16" height="16" viewBox="0 0 16 16"><path d="M3 4.5 A6 6 0 1 1 2.5 9.5" fill="none" stroke="#3a5a8a" stroke-width="2"/><path d="M1 2 L4.5 5.5 L1 6.5 Z" fill="#3a5a8a"/><path d="M6 6 L9 5 L11 6.5 V10 L8 11 L6 10 Z" fill="none" stroke="#3a5a8a" stroke-width="0.9"/></svg>
<svg class="a" style="left:827px;top:283px;" width="16" height="16" viewBox="0 0 16 16"><rect x="6" y="1" width="9" height="8" fill="#f6f0a0" stroke="#8a8a4a"/><path d="M8 3.5 H13 M8 5 H13 M8 6.5 H13" stroke="#8a8a4a" stroke-width="0.7"/><path d="M1 2 L5 8 M7 13 L12 15" stroke="#2030c0" stroke-width="0.8" stroke-dasharray="1.5 1"/><path d="M2 11.5 H8 M5 8.5 V14.5" stroke="#000" stroke-width="1.8"/></svg>
<svg class="a" style="left:851px;top:283px;" width="16" height="16" viewBox="0 0 16 16"><path d="M13.5 1.5 L6 10" stroke="#4a5aa0" stroke-width="2.2"/><path d="M6.5 9 Q3 9.5 2.5 14 Q6.5 14 7.5 10.5 Z" fill="#444" stroke="#222" stroke-width="0.6"/><rect x="10" y="11" width="4.5" height="4.5" fill="#ee0000"/></svg>
<svg class="a" style="left:873px;top:283px;" width="8" height="16" viewBox="0 0 8 16"><path d="M1 6 H7 L4 9 Z" fill="#333"/></svg>
<div class="a" style="left:886px;top:282px;width:1px;height:19px;background:#a0a0a0"></div>
<svg class="a" style="left:893px;top:283px;" width="16" height="16" viewBox="0 0 16 16"><rect x="4" y="1.5" width="10" height="8" fill="#dfe8f4" stroke="#3a5a8a"/><rect x="1.5" y="3.5" width="10" height="8" fill="#eef2f8" stroke="#3a5a8a"/><path d="M2 12.5 Q2 10.5 5 10.5 H8 Q10 10.5 10 12.5 Q10 14.5 8 14.5 H5 Q2 14.5 2 12.5 Z M7 12.5 Q7 10.5 10 10.5 H12 Q14.5 10.5 14.5 12.5 Q14.5 14.5 12 14.5 H10" fill="none" stroke="#3a5a8a" stroke-width="1.2"/></svg>
<div class="a" style="left:917px;top:282px;width:1px;height:19px;background:#a0a0a0"></div>
<svg class="a" style="left:926px;top:283px;" width="16" height="16" viewBox="0 0 16 16"><defs><linearGradient id="cb" x1="0" y1="0" x2="0" y2="1"><stop offset="0" stop-color="#a8b8f8"/><stop offset="0.5" stop-color="#a8e0d0"/><stop offset="1" stop-color="#f8b890"/></linearGradient></defs><rect x="4.5" y="1.5" width="7" height="13" fill="url(#cb)" stroke="#3a4a80"/></svg>
<svg class="a" style="left:947px;top:283px;" width="16" height="16" viewBox="0 0 16 16"><rect x="1.5" y="1.5" width="13" height="13" fill="#f4f4f8" stroke="#3a4a80"/><rect x="3" y="4" width="4" height="3" fill="#e05050"/><rect x="3" y="9" width="4" height="3" fill="#5060e0"/><path d="M9 5.5 H13 M9 10.5 H13" stroke="#000" stroke-width="1"/></svg>
<div class="a" style="left:971px;top:282px;width:1px;height:19px;background:#a0a0a0"></div>
<svg class="a" style="left:981px;top:283px;" width="16" height="16" viewBox="0 0 16 16"><rect x="2.5" y="3.5" width="11" height="10" fill="#9a9a9a" stroke="#888"/></svg>
<svg class="a" style="left:1001px;top:283px;" width="16" height="16" viewBox="0 0 16 16"><rect x="1.5" y="2.5" width="13" height="11" fill="#fff" stroke="#3a4a80" stroke-width="1.2"/><rect x="1.5" y="2.5" width="13" height="2" fill="#3a4a80"/><path d="M3 5 V13 M13 5 V13" stroke="#3a4a80" stroke-width="1.5" stroke-dasharray="1 1"/></svg>
<div class="a" style="left:674px;top:338px;width:434px;height:343px;background:#fff"></div>
<svg class="a" style="left:674px;top:338px;overflow:visible" width="434" height="343" viewBox="0 0 434 343"><path d="M0.50 0 V4 M0.50 343 V339" stroke="#262626" stroke-width="1" shape-rendering="crispEdges"/><path d="M43.80 0 V4 M43.80 343 V339" stroke="#262626" stroke-width="1" shape-rendering="crispEdges"/><path d="M87.10 0 V4 M87.10 343 V339" stroke="#262626" stroke-width="1" shape-rendering="crispEdges"/><path d="M130.40 0 V4 M130.40 343 V339" stroke="#262626" stroke-width="1" shape-rendering="crispEdges"/><path d="M173.70 0 V4 M173.70 343 V339" stroke="#262626" stroke-width="1" shape-rendering="crispEdges"/><path d="M217.00 0 V4 M217.00 343 V339" stroke="#262626" stroke-width="1" shape-rendering="crispEdges"/><path d="M260.30 0 V4 M260.30 343 V339" stroke="#262626" stroke-width="1" shape-rendering="crispEdges"/><path d="M303.60 0 V4 M303.60 343 V339" stroke="#262626" stroke-width="1" shape-rendering="crispEdges"/><path d="M346.90 0 V4 M346.90 343 V339" stroke="#262626" stroke-width="1" shape-rendering="crispEdges"/><path d="M390.20 0 V4 M390.20 343 V339" stroke="#262626" stroke-width="1" shape-rendering="crispEdges"/><path d="M433.50 0 V4 M433.50 343 V339" stroke="#262626" stroke-width="1" shape-rendering="crispEdges"/><path d="M0 342.50 H4 M434 342.50 H430" stroke="#262626" stroke-width="1" shape-rendering="crispEdges"/><path d="M0 293.64 H4 M434 293.64 H430" stroke="#262626" stroke-width="1" shape-rendering="crispEdges"/><path d="M0 244.79 H4 M434 244.79 H430" stroke="#262626" stroke-width="1" shape-rendering="crispEdges"/><path d="M0 195.93 H4 M434 195.93 H430" stroke="#262626" stroke-width="1" shape-rendering="crispEdges"/><path d="M0 147.07 H4 M434 147.07 H430" stroke="#262626" stroke-width="1" shape-rendering="crispEdges"/><path d="M0 98.21 H4 M434 98.21 H430" stroke="#262626" stroke-width="1" shape-rendering="crispEdges"/><path d="M0 49.36 H4 M434 49.36 H430" stroke="#262626" stroke-width="1" shape-rendering="crispEdges"/><path d="M0 0.50 H4 M434 0.50 H430" stroke="#262626" stroke-width="1" shape-rendering="crispEdges"/><polyline points="408.60,3.30 24.30,10.20 217.40,13.60 217.40,20.30 24.30,23.40 409.60,27.50 409.60,30.30 217.40,34.40 217.40,37.50 409.60,41.40 217.40,44.70 217.40,57.90 24.30,61.50 24.30,65.60 217.40,68.20 217.40,85.50 24.30,89.30 217.40,92.60 217.40,116.10 409.60,119.50 409.60,123.30 217.40,126.20 217.40,140.10 24.30,143.90 409.60,147.30 217.40,150.20 217.40,294.60 24.30,298.20 217.40,301.30 217.40,322.10 24.30,325.00 217.40,329.30 217.40,342.00" fill="none" stroke="#0072bd" stroke-width="1" shape-rendering="crispEdges"/><rect x="0.5" y="0.5" width="433" height="342" fill="none" stroke="#262626" stroke-width="1"/></svg>
<div class="t" style="left:674.5px;top:689.1px;font-size:13.33px;color:#262626;font-family:'Liberation Sans';transform:translateX(-50%)">-2.5</div>
<div class="t" style="left:717.8px;top:689.1px;font-size:13.33px;color:#262626;font-family:'Liberation Sans';transform:translateX(-50%)">-2</div>
<div class="t" style="left:761.1px;top:689.1px;font-size:13.33px;color:#262626;font-family:'Liberation Sans';transform:translateX(-50%)">-1.5</div>
<div class="t" style="left:804.4px;top:689.1px;font-size:13.33px;color:#262626;font-family:'Liberation Sans';transform:translateX(-50%)">-1</div>
<div class="t" style="left:847.7px;top:689.1px;font-size:13.33px;color:#262626;font-family:'Liberation Sans';transform:translateX(-50%)">-0.5</div>
<div class="t" style="left:891.0px;top:689.1px;font-size:13.33px;color:#262626;font-family:'Liberation Sans';transform:translateX(-50%)">0</div>
<div class="t" style="left:934.3px;top:689.1px;font-size:13.33px;color:#262626;font-family:'Liberation Sans';transform:translateX(-50%)">0.5</div>
<div class="t" style="left:977.6px;top:689.1px;font-size:13.33px;color:#262626;font-family:'Liberation Sans';transform:translateX(-50%)">1</div>
<div class="t" style="left:1020.9px;top:689.1px;font-size:13.33px;color:#262626;font-family:'Liberation Sans';transform:translateX(-50%)">1.5</div>
<div class="t" style="left:1064.2px;top:689.1px;font-size:13.33px;color:#262626;font-family:'Liberation Sans';transform:translateX(-50%)">2</div>
<div class="t" style="left:1107.5px;top:689.1px;font-size:13.33px;color:#262626;font-family:'Liberation Sans';transform:translateX(-50%)">2.5</div>
<div class="t" style="right:1188.3px;top:675.2px;font-size:13.33px;color:#262626">0</div>
<div class="t" style="right:1188.3px;top:626.4px;font-size:13.33px;color:#262626">0.05</div>
<div class="t" style="right:1188.3px;top:577.5px;font-size:13.33px;color:#262626">0.1</div>
<div class="t" style="right:1188.3px;top:528.6px;font-size:13.33px;color:#262626">0.15</div>
<div class="t" style="right:1188.3px;top:479.8px;font-size:13.33px;color:#262626">0.2</div>
<div class="t" style="right:1188.3px;top:430.9px;font-size:13.33px;color:#262626">0.25</div>
<div class="t" style="right:1188.3px;top:382.1px;font-size:13.33px;color:#262626">0.3</div>
<div class="t" style="right:1188.3px;top:333.2px;font-size:13.33px;color:#262626">0.35</div>
<div class="t" style="right:749.0px;top:711.2px;font-size:13.33px;color:#262626"><span style="font-size:12px;margin-right:2px">&#215;</span>10<span style="font-size:11px;position:relative;top:-6px">-16</span></div>
<div class="a" style="left:1166px;top:226px;width:562px;height:506px;background:#f6f2f6;border:1px solid #8a8a8a"></div>
<div class="a" style="left:1167px;top:227px;width:560px;height:55px;background:#fff"></div>
<div class="a" style="left:1167px;top:282px;width:560px;height:1px;background:#a8a8a8"></div>
<div class="a" style="left:1167px;top:309px;width:560px;height:1px;background:#a8a8a8"></div>
<div class="a" style="left:1167px;top:310px;width:560px;height:1px;background:#fff"></div>
<div class="a" style="left:1175px;top:233px;width:16px;height:16px;background:#eef0f4;border:1px solid #9aa;border-top:2px solid #6aa0d8"></div>
<svg class="a" style="left:1177px;top:236px" width="12" height="12" viewBox="0 0 16 16">
<path d="M0.5 9.5 L5 7 L7 8.5 L4 12 Z" fill="#5aa0d8"/>
<path d="M4 12 L7 8.5 L9.5 2 L11 1.5 L8 13 Z" fill="#c0392b"/>
<path d="M9.5 2 Q10.5 0.5 11.5 2 L15.5 13 L12.5 11 L10 14.5 L8 13 Z" fill="#e8762b"/>
</svg>
<div class="t" style="left:1196.5px;top:236.6px;font-size:12px;color:#888;font-family:'Liberation Sans';letter-spacing:-0.3px">Figure 3</div>
<div class="a" style="left:1608px;top:241px;width:10px;height:1px;background:#999"></div>
<div class="a" style="left:1653px;top:236px;width:10px;height:10px;border:1px solid #999"></div>
<svg class="a" style="left:1699px;top:236px;" width="10" height="10" viewBox="0 0 10 10"><path d="M0 0 L10 10 M10 0 L0 10" stroke="#999" stroke-width="1"/></svg>
<div class="t" style="left:1175.2px;top:263.6px;font-size:12px;color:#000;font-family:'Liberation Sans'">File</div>
<div class="t" style="left:1210.2px;top:263.6px;font-size:12px;color:#000;font-family:'Liberation Sans'">Edit</div>
<div class="t" style="left:1247.0px;top:263.6px;font-size:12px;color:#000;font-family:'Liberation Sans'">View</div>
<div class="t" style="left:1288.3px;top:263.6px;font-size:12px;color:#000;font-family:'Liberation Sans'">Insert</div>
<div class="t" style="left:1333.3px;top:263.6px;font-size:12px;color:#000;font-family:'Liberation Sans'">Tools</div>
<div class="t" style="left:1378.6px;top:263.6px;font-size:12px;color:#000;font-family:'Liberation Sans'">Desktop</div>
<div class="t" style="left:1437.4px;top:263.6px;font-size:12px;color:#000;font-family:'Liberation Sans'">Window</div>
<div class="t" style="left:1498.6px;top:263.6px;font-size:12px;color:#000;font-family:'Liberation Sans'">Help</div>
<svg class="a" style="left:1715px;top:266px;" width="8" height="7" viewBox="0 0 8 7"><path d="M0.5 0.5 L6.5 6 M6.5 2.5 V6.5 H2.5" stroke="#000" stroke-width="1.4" fill="none"/></svg>
<svg class="a" style="left:1170px;top:287px;" width="16" height="16" viewBox="0 0 16 16"><path d="M2.5 2.5 H10 L13.5 6 V15.5 H2.5 Z" fill="#f4f8ff" stroke="#5a6ea8"/><path d="M10 2.5 V6 H13.5" fill="#dfe6f5" stroke="#5a6ea8"/><circle cx="3" cy="3" r="2.2" fill="#ffb030" stroke="#e05010" stroke-width="0.8"/></svg>
<svg class="a" style="left:1192px;top:287px;" width="16" height="16" viewBox="0 0 16 16"><path d="M1.5 5.5 H6 L7 4 H12 V14.5 H1.5 Z" fill="#e8c848" stroke="#a88018"/><path d="M1.5 14.5 L4 8.5 H15 L12.5 14.5 Z" fill="#fce890" stroke="#a88018"/><path d="M9 3 Q12 0 14 4" fill="none" stroke="#3060a0" stroke-width="1.2"/></svg>
<svg class="a" style="left:1216px;top:287px;" width="16" height="16" viewBox="0 0 16 16"><rect x="1.5" y="1.5" width="13" height="13" fill="#4a58c0" stroke="#2a3488"/><rect x="4" y="2" width="8" height="5" fill="#e8ecff"/><rect x="5" y="10" width="5" height="4" fill="#1a1a3a"/><rect x="7" y="11" width="2" height="2" fill="#ddd"/></svg>
<svg class="a" style="left:1240px;top:287px;" width="16" height="16" viewBox="0 0 16 16"><rect x="4" y="1.5" width="8" height="6" fill="#cfe4f8" stroke="#889"/><path d="M1.5 8 H14.5 V12.5 H1.5 Z" fill="#9a9a9a" stroke="#555"/><rect x="3" y="12" width="10" height="3" fill="#ddd" stroke="#777"/></svg>
<div class="a" style="left:1263px;top:286px;width:1px;height:19px;background:#a0a0a0"></div>
<svg class="a" style="left:1271px;top:287px;" width="16" height="16" viewBox="0 0 16 16"><path d="M4.5 1.5 V13 L7 10.5 L9 15 L11 14 L9 9.5 H12.5 Z" fill="#fff" stroke="#000" stroke-width="1"/></svg>
<div class="a" style="left:1293px;top:286px;width:1px;height:19px;background:#a0a0a0"></div>
<svg class="a" style="left:1300px;top:287px;" width="16" height="16" viewBox="0 0 16 16"><circle cx="6" cy="6" r="4.5" fill="#e6f0ff" stroke="#5a7ac8" stroke-width="1.2"/><path d="M3.8 6 H8.2 M6 3.8 V8.2" stroke="#3050a0" stroke-width="1.3"/><path d="M9.5 9.5 L14.5 14.5" stroke="#d08a20" stroke-width="2.2"/></svg>
<svg class="a" style="left:1324px;top:287px;" width="16" height="16" viewBox="0 0 16 16"><circle cx="6" cy="6" r="4.5" fill="#e6f0ff" stroke="#5a7ac8" stroke-width="1.2"/><path d="M3.8 6 H8.2" stroke="#3050a0" stroke-width="1.3"/><path d="M9.5 9.5 L14.5 14.5" stroke="#d08a20" stroke-width="2.2"/></svg>
<svg class="a" style="left:1347px;top:287px;" width="16" height="16" viewBox="0 0 16 16"><path d="M4.5 9 V4 Q4.5 2.8 5.6 2.8 Q6.6 2.8 6.6 4 V7.5 V2.5 Q6.6 1.2 7.7 1.2 Q8.8 1.2 8.8 2.5 V7.5 V2.2 Q8.8 1 9.9 1 Q11 1 11 2.2 V7.5 V3.5 Q11 2.4 12 2.4 Q13 2.4 13 3.5 V10.5 Q13 15.5 8.5 15.5 Q6 15.5 4.5 13.5 L1.5 9.8 Q0.8 8.8 1.8 8.2 Q2.8 7.8 3.6 8.8 Z" fill="#f6dcc4" stroke="#5060a0" stroke-width="0.9"/></svg>
<svg class="a" style="left:1370px;top:287px;" width="16" height="16" viewBox="0 0 16 16"><path d="M3 4.5 A6 6 0 1 1 2.5 9.5" fill="none" stroke="#3a5a8a" stroke-width="2"/><path d="M1 2 L4.5 5.5 L1 6.5 Z" fill="#3a5a8a"/><path d="M6 6 L9 5 L11 6.5 V10 L8 11 L6 10 Z" fill="none" stroke="#3a5a8a" stroke-width="0.9"/></svg>
<svg class="a" style="left:1393px;top:287px;" width="16" height="16" viewBox="0 0 16 16"><rect x="6" y="1" width="9" height="8" fill="#f6f0a0" stroke="#8a8a4a"/><path d="M8 3.5 H13 M8 5 H13 M8 6.5 H13" stroke="#8a8a4a" stroke-width="0.7"/><path d="M1 2 L5 8 M7 13 L12 15" stroke="#2030c0" stroke-width="0.8" stroke-dasharray="1.5 1"/><path d="M2 11.5 H8 M5 8.5 V14.5" stroke="#000" stroke-width="1.8"/></svg>
<svg class="a" style="left:1417px;top:287px;" width="16" height="16" viewBox="0 0 16 16"><path d="M13.5 1.5 L6 10" stroke="#4a5aa0" stroke-width="2.2"/><path d="M6.5 9 Q3 9.5 2.5 14 Q6.5 14 7.5 10.5 Z" fill="#444" stroke="#222" stroke-width="0.6"/><rect x="10" y="11" width="4.5" height="4.5" fill="#ee0000"/></svg>
<svg class="a" style="left:1439px;top:287px;" width="8" height="16" viewBox="0 0 8 16"><path d="M1 6 H7 L4 9 Z" fill="#333"/></svg>
<div class="a" style="left:1452px;top:286px;width:1px;height:19px;background:#a0a0a0"></div>
<svg class="a" style="left:1459px;top:287px;" width="16" height="16" viewBox="0 0 16 16"><rect x="4" y="1.5" width="10" height="8" fill="#dfe8f4" stroke="#3a5a8a"/><rect x="1.5" y="3.5" width="10" height="8" fill="#eef2f8" stroke="#3a5a8a"/><path d="M2 12.5 Q2 10.5 5 10.5 H8 Q10 10.5 10 12.5 Q10 14.5 8 14.5 H5 Q2 14.5 2 12.5 Z M7 12.5 Q7 10.5 10 10.5 H12 Q14.5 10.5 14.5 12.5 Q14.5 14.5 12 14.5 H10" fill="none" stroke="#3a5a8a" stroke-width="1.2"/></svg>
<div class="a" style="left:1483px;top:286px;width:1px;height:19px;background:#a0a0a0"></div>
<svg class="a" style="left:1492px;top:287px;" width="16" height="16" viewBox="0 0 16 16"><defs><linearGradient id="cb" x1="0" y1="0" x2="0" y2="1"><stop offset="0" stop-color="#a8b8f8"/><stop offset="0.5" stop-color="#a8e0d0"/><stop offset="1" stop-color="#f8b890"/></linearGradient></defs><rect x="4.5" y="1.5" width="7" height="13" fill="url(#cb)" stroke="#3a4a80"/></svg>
<svg class="a" style="left:1513px;top:287px;" width="16" height="16" viewBox="0 0 16 16"><rect x="1.5" y="1.5" width="13" height="13" fill="#f4f4f8" stroke="#3a4a80"/><rect x="3" y="4" width="4" height="3" fill="#e05050"/><rect x="3" y="9" width="4" height="3" fill="#5060e0"/><path d="M9 5.5 H13 M9 10.5 H13" stroke="#000" stroke-width="1"/></svg>
<div class="a" style="left:1537px;top:286px;width:1px;height:19px;background:#a0a0a0"></div>
<svg class="a" style="left:1547px;top:287px;" width="16" height="16" viewBox="0 0 16 16"><rect x="2.5" y="3.5" width="11" height="10" fill="#9a9a9a" stroke="#888"/></svg>
<svg class="a" style="left:1567px;top:287px;" width="16" height="16" viewBox="0 0 16 16"><rect x="1.5" y="2.5" width="13" height="11" fill="#fff" stroke="#3a4a80" stroke-width="1.2"/><rect x="1.5" y="2.5" width="13" height="2" fill="#3a4a80"/><path d="M3 5 V13 M13 5 V13" stroke="#3a4a80" stroke-width="1.5" stroke-dasharray="1 1"/></svg>
<div class="a" style="left:1240px;top:342px;width:434px;height:343px;background:#fff"></div>
<svg class="a" style="left:1240px;top:342px;overflow:visible" width="434" height="343" viewBox="0 0 434 343"><path d="M0.50 0 V4 M0.50 343 V339" stroke="#262626" stroke-width="1" shape-rendering="crispEdges"/><path d="M48.61 0 V4 M48.61 343 V339" stroke="#262626" stroke-width="1" shape-rendering="crispEdges"/><path d="M96.72 0 V4 M96.72 343 V339" stroke="#262626" stroke-width="1" shape-rendering="crispEdges"/><path d="M144.83 0 V4 M144.83 343 V339" stroke="#262626" stroke-width="1" shape-rendering="crispEdges"/><path d="M192.94 0 V4 M192.94 343 V339" stroke="#262626" stroke-width="1" shape-rendering="crispEdges"/><path d="M241.06 0 V4 M241.06 343 V339" stroke="#262626" stroke-width="1" shape-rendering="crispEdges"/><path d="M289.17 0 V4 M289.17 343 V339" stroke="#262626" stroke-width="1" shape-rendering="crispEdges"/><path d="M337.28 0 V4 M337.28 343 V339" stroke="#262626" stroke-width="1" shape-rendering="crispEdges"/><path d="M385.39 0 V4 M385.39 343 V339" stroke="#262626" stroke-width="1" shape-rendering="crispEdges"/><path d="M433.50 0 V4 M433.50 343 V339" stroke="#262626" stroke-width="1" shape-rendering="crispEdges"/><path d="M0 342.50 H4 M434 342.50 H430" stroke="#262626" stroke-width="1" shape-rendering="crispEdges"/><path d="M0 293.64 H4 M434 293.64 H430" stroke="#262626" stroke-width="1" shape-rendering="crispEdges"/><path d="M0 244.79 H4 M434 244.79 H430" stroke="#262626" stroke-width="1" shape-rendering="crispEdges"/><path d="M0 195.93 H4 M434 195.93 H430" stroke="#262626" stroke-width="1" shape-rendering="crispEdges"/><path d="M0 147.07 H4 M434 147.07 H430" stroke="#262626" stroke-width="1" shape-rendering="crispEdges"/><path d="M0 98.21 H4 M434 98.21 H430" stroke="#262626" stroke-width="1" shape-rendering="crispEdges"/><path d="M0 49.36 H4 M434 49.36 H430" stroke="#262626" stroke-width="1" shape-rendering="crispEdges"/><path d="M0 0.50 H4 M434 0.50 H430" stroke="#262626" stroke-width="1" shape-rendering="crispEdges"/><path d="M385.40,2.40 L266.30,14.00 C257.30,15.60 252.30,16.80 252.30,17.20 C252.80,17.80 256.30,19.40 262.30,20.70 L376.50,30.20 C379.00,30.60 379.50,31.00 379.50,31.20 C379.50,31.80 378.50,32.60 376.50,33.20 L250.10,44.60 C241.10,46.20 236.10,47.40 236.10,47.80 C236.60,48.40 240.10,50.00 246.10,51.30 L382.00,60.70 C384.50,61.10 385.00,61.50 385.00,61.70 C385.00,62.30 384.00,63.10 382.00,63.70 L237.30,75.30 C228.30,76.90 223.30,78.10 223.30,78.50 C223.80,79.10 227.30,80.70 233.30,82.00 L380.80,91.50 C383.30,91.90 383.80,92.30 383.80,92.50 C383.80,93.10 382.80,93.90 380.80,94.50 L219.50,106.10 C210.50,107.70 205.50,108.90 205.50,109.30 C206.00,109.90 209.50,111.50 215.50,112.80 L376.10,125.10 C378.60,125.50 379.10,125.90 379.10,126.10 C379.10,126.70 378.10,127.50 376.10,128.10 L202.30,137.20 C193.30,138.80 188.30,140.00 188.30,140.40 C188.80,141.00 192.30,142.60 198.30,143.90 L381.80,156.60 C384.30,157.00 384.80,157.40 384.80,157.60 C384.80,158.20 383.80,159.00 381.80,159.60 L179.20,171.40 C170.20,173.00 165.20,174.20 165.20,174.60 C165.70,175.20 169.20,176.80 175.20,178.10 L382.10,190.90 C384.60,191.30 385.10,191.70 385.10,191.90 C385.10,192.50 384.10,193.30 382.10,193.90 L156.20,205.80 C147.20,207.40 142.20,208.60 142.20,209.00 C142.70,209.60 146.20,211.20 152.20,212.50 L375.00,226.90 C377.50,227.30 378.00,227.70 378.00,227.90 C378.00,228.50 377.00,229.30 375.00,229.90 L124.90,243.70 C115.90,245.30 110.90,246.50 110.90,246.90 C111.40,247.50 114.90,249.10 120.90,250.40 L380.90,262.90 C383.40,263.30 383.90,263.70 383.90,263.90 C383.90,264.50 382.90,265.30 380.90,265.90 L94.10,281.10 C85.10,282.70 80.10,283.90 80.10,284.30 C80.60,284.90 84.10,286.50 90.10,287.80 L378.50,300.40 C381.00,300.80 381.50,301.20 381.50,301.40 C381.50,302.00 380.50,302.80 378.50,303.40 L44.80,318.80 C35.80,320.40 30.80,321.60 30.80,322.00 C31.30,322.60 34.80,324.20 40.80,325.50 L376.80,341.60 L385.00,342.00" fill="none" stroke="#0072bd" stroke-width="1" shape-rendering="crispEdges"/><rect x="0.5" y="0.5" width="433" height="342" fill="none" stroke="#262626" stroke-width="1"/></svg>
<div class="t" style="left:1240.5px;top:693.1px;font-size:13.33px;color:#262626;font-family:'Liberation Sans';transform:translateX(-50%)">-8</div>
<div class="t" style="left:1288.6px;top:693.1px;font-size:13.33px;color:#262626;font-family:'Liberation Sans';transform:translateX(-50%)">-7</div>
<div class="t" style="left:1336.7px;top:693.1px;font-size:13.33px;color:#262626;font-family:'Liberation Sans';transform:translateX(-50%)">-6</div>
<div class="t" style="left:1384.8px;top:693.1px;font-size:13.33px;color:#262626;font-family:'Liberation Sans';transform:translateX(-50%)">-5</div>
<div class="t" style="left:1432.9px;top:693.1px;font-size:13.33px;color:#262626;font-family:'Liberation Sans';transform:translateX(-50%)">-4</div>
<div class="t" style="left:1481.1px;top:693.1px;font-size:13.33px;color:#262626;font-family:'Liberation Sans';transform:translateX(-50%)">-3</div>
<div class="t" style="left:1529.2px;top:693.1px;font-size:13.33px;color:#262626;font-family:'Liberation Sans';transform:translateX(-50%)">-2</div>
<div class="t" style="left:1577.3px;top:693.1px;font-size:13.33px;color:#262626;font-family:'Liberation Sans';transform:translateX(-50%)">-1</div>
<div class="t" style="left:1625.4px;top:693.1px;font-size:13.33px;color:#262626;font-family:'Liberation Sans';transform:translateX(-50%)">0</div>
<div class="t" style="left:1673.5px;top:693.1px;font-size:13.33px;color:#262626;font-family:'Liberation Sans';transform:translateX(-50%)">1</div>
<div class="t" style="right:622.3px;top:679.2px;font-size:13.33px;color:#262626">0</div>
<div class="t" style="right:622.3px;top:630.4px;font-size:13.33px;color:#262626">0.05</div>
<div class="t" style="right:622.3px;top:581.5px;font-size:13.33px;color:#262626">0.1</div>
<div class="t" style="right:622.3px;top:532.6px;font-size:13.33px;color:#262626">0.15</div>
<div class="t" style="right:622.3px;top:483.8px;font-size:13.33px;color:#262626">0.2</div>
<div class="t" style="right:622.3px;top:434.9px;font-size:13.33px;color:#262626">0.25</div>
<div class="t" style="right:622.3px;top:386.1px;font-size:13.33px;color:#262626">0.3</div>
<div class="t" style="right:622.3px;top:337.2px;font-size:13.33px;color:#262626">0.35</div>
<div class="t" style="right:183.0px;top:715.2px;font-size:13.33px;color:#262626"><span style="font-size:12px;margin-right:2px">&#215;</span>10<span style="font-size:11px;position:relative;top:-6px">-9</span></div>
<div class="a" style="left:38px;top:221px;width:562px;height:506px;background:#f6f2f6;border:1px solid #4a4a4a"></div>
<div class="a" style="left:39px;top:222px;width:560px;height:55px;background:#fff"></div>
<div class="a" style="left:39px;top:277px;width:560px;height:1px;background:#a8a8a8"></div>
<div class="a" style="left:39px;top:304px;width:560px;height:1px;background:#a8a8a8"></div>
<div class="a" style="left:39px;top:305px;width:560px;height:1px;background:#fff"></div>
<div class="a" style="left:47px;top:228px;width:16px;height:16px;background:#eef0f4;border:1px solid #9aa;border-top:2px solid #6aa0d8"></div>
<svg class="a" style="left:49px;top:231px" width="12" height="12" viewBox="0 0 16 16">
<path d="M0.5 9.5 L5 7 L7 8.5 L4 12 Z" fill="#5aa0d8"/>
<path d="M4 12 L7 8.5 L9.5 2 L11 1.5 L8 13 Z" fill="#c0392b"/>
<path d="M9.5 2 Q10.5 0.5 11.5 2 L15.5 13 L12.5 11 L10 14.5 L8 13 Z" fill="#e8762b"/>
</svg>
<div class="t" style="left:68.5px;top:231.6px;font-size:12px;color:#000;font-family:'Liberation Sans';letter-spacing:-0.3px">Figure 1</div>
<div class="a" style="left:480px;top:236px;width:10px;height:1px;background:#111"></div>
<div class="a" style="left:525px;top:231px;width:10px;height:10px;border:1px solid #111"></div>
<svg class="a" style="left:571px;top:231px;" width="10" height="10" viewBox="0 0 10 10"><path d="M0 0 L10 10 M10 0 L0 10" stroke="#111" stroke-width="1"/></svg>
<div class="t" style="left:47.2px;top:258.6px;font-size:12px;color:#000;font-family:'Liberation Sans'">File</div>
<div class="t" style="left:82.2px;top:258.6px;font-size:12px;color:#000;font-family:'Liberation Sans'">Edit</div>
<div class="t" style="left:119.0px;top:258.6px;font-size:12px;color:#000;font-family:'Liberation Sans'">View</div>
<div class="t" style="left:160.3px;top:258.6px;font-size:12px;color:#000;font-family:'Liberation Sans'">Insert</div>
<div class="t" style="left:205.3px;top:258.6px;font-size:12px;color:#000;font-family:'Liberation Sans'">Tools</div>
<div class="t" style="left:250.6px;top:258.6px;font-size:12px;color:#000;font-family:'Liberation Sans'">Desktop</div>
<div class="t" style="left:309.4px;top:258.6px;font-size:12px;color:#000;font-family:'Liberation Sans'">Window</div>
<div class="t" style="left:370.6px;top:258.6px;font-size:12px;color:#000;font-family:'Liberation Sans'">Help</div>
<svg class="a" style="left:587px;top:261px;" width="8" height="7" viewBox="0 0 8 7"><path d="M0.5 0.5 L6.5 6 M6.5 2.5 V6.5 H2.5" stroke="#000" stroke-width="1.4" fill="none"/></svg>
<svg class="a" style="left:42px;top:282px;" width="16" height="16" viewBox="0 0 16 16"><path d="M2.5 2.5 H10 L13.5 6 V15.5 H2.5 Z" fill="#f4f8ff" stroke="#5a6ea8"/><path d="M10 2.5 V6 H13.5" fill="#dfe6f5" stroke="#5a6ea8"/><circle cx="3" cy="3" r="2.2" fill="#ffb030" stroke="#e05010" stroke-width="0.8"/></svg>
<svg class="a" style="left:64px;top:282px;" width="16" height="16" viewBox="0 0 16 16"><path d="M1.5 5.5 H6 L7 4 H12 V14.5 H1.5 Z" fill="#e8c848" stroke="#a88018"/><path d="M1.5 14.5 L4 8.5 H15 L12.5 14.5 Z" fill="#fce890" stroke="#a88018"/><path d="M9 3 Q12 0 14 4" fill="none" stroke="#3060a0" stroke-width="1.2"/></svg>
<svg class="a" style="left:88px;top:282px;" width="16" height="16" viewBox="0 0 16 16"><rect x="1.5" y="1.5" width="13" height="13" fill="#4a58c0" stroke="#2a3488"/><rect x="4" y="2" width="8" height="5" fill="#e8ecff"/><rect x="5" y="10" width="5" height="4" fill="#1a1a3a"/><rect x="7" y="11" width="2" height="2" fill="#ddd"/></svg>
<svg class="a" style="left:112px;top:282px;" width="16" height="16" viewBox="0 0 16 16"><rect x="4" y="1.5" width="8" height="6" fill="#cfe4f8" stroke="#889"/><path d="M1.5 8 H14.5 V12.5 H1.5 Z" fill="#9a9a9a" stroke="#555"/><rect x="3" y="12" width="10" height="3" fill="#ddd" stroke="#777"/></svg>
<div class="a" style="left:135px;top:281px;width:1px;height:19px;background:#a0a0a0"></div>
<svg class="a" style="left:143px;top:282px;" width="16" height="16" viewBox="0 0 16 16"><path d="M4.5 1.5 V13 L7 10.5 L9 15 L11 14 L9 9.5 H12.5 Z" fill="#fff" stroke="#000" stroke-width="1"/></svg>
<div class="a" style="left:165px;top:281px;width:1px;height:19px;background:#a0a0a0"></div>
<svg class="a" style="left:172px;top:282px;" width="16" height="16" viewBox="0 0 16 16"><circle cx="6" cy="6" r="4.5" fill="#e6f0ff" stroke="#5a7ac8" stroke-width="1.2"/><path d="M3.8 6 H8.2 M6 3.8 V8.2" stroke="#3050a0" stroke-width="1.3"/><path d="M9.5 9.5 L14.5 14.5" stroke="#d08a20" stroke-width="2.2"/></svg>
<svg class="a" style="left:196px;top:282px;" width="16" height="16" viewBox="0 0 16 16"><circle cx="6" cy="6" r="4.5" fill="#e6f0ff" stroke="#5a7ac8" stroke-width="1.2"/><path d="M3.8 6 H8.2" stroke="#3050a0" stroke-width="1.3"/><path d="M9.5 9.5 L14.5 14.5" stroke="#d08a20" stroke-width="2.2"/></svg>
<svg class="a" style="left:219px;top:282px;" width="16" height="16" viewBox="0 0 16 16"><path d="M4.5 9 V4 Q4.5 2.8 5.6 2.8 Q6.6 2.8 6.6 4 V7.5 V2.5 Q6.6 1.2 7.7 1.2 Q8.8 1.2 8.8 2.5 V7.5 V2.2 Q8.8 1 9.9 1 Q11 1 11 2.2 V7.5 V3.5 Q11 2.4 12 2.4 Q13 2.4 13 3.5 V10.5 Q13 15.5 8.5 15.5 Q6 15.5 4.5 13.5 L1.5 9.8 Q0.8 8.8 1.8 8.2 Q2.8 7.8 3.6 8.8 Z" fill="#f6dcc4" stroke="#5060a0" stroke-width="0.9"/></svg>
<svg class="a" style="left:242px;top:282px;" width="16" height="16" viewBox="0 0 16 16"><path d="M3 4.5 A6 6 0 1 1 2.5 9.5" fill="none" stroke="#3a5a8a" stroke-width="2"/><path d="M1 2 L4.5 5.5 L1 6.5 Z" fill="#3a5a8a"/><path d="M6 6 L9 5 L11 6.5 V10 L8 11 L6 10 Z" fill="none" stroke="#3a5a8a" stroke-width="0.9"/></svg>
<svg class="a" style="left:265px;top:282px;" width="16" height="16" viewBox="0 0 16 16"><rect x="6" y="1" width="9" height="8" fill="#f6f0a0" stroke="#8a8a4a"/><path d="M8 3.5 H13 M8 5 H13 M8 6.5 H13" stroke="#8a8a4a" stroke-width="0.7"/><path d="M1 2 L5 8 M7 13 L12 15" stroke="#2030c0" stroke-width="0.8" stroke-dasharray="1.5 1"/><path d="M2 11.5 H8 M5 8.5 V14.5" stroke="#000" stroke-width="1.8"/></svg>
<svg class="a" style="left:289px;top:282px;" width="16" height="16" viewBox="0 0 16 16"><path d="M13.5 1.5 L6 10" stroke="#4a5aa0" stroke-width="2.2"/><path d="M6.5 9 Q3 9.5 2.5 14 Q6.5 14 7.5 10.5 Z" fill="#444" stroke="#222" stroke-width="0.6"/><rect x="10" y="11" width="4.5" height="4.5" fill="#ee0000"/></svg>
<svg class="a" style="left:311px;top:282px;" width="8" height="16" viewBox="0 0 8 16"><path d="M1 6 H7 L4 9 Z" fill="#333"/></svg>
<div class="a" style="left:324px;top:281px;width:1px;height:19px;background:#a0a0a0"></div>
<svg class="a" style="left:331px;top:282px;" width="16" height="16" viewBox="0 0 16 16"><rect x="4" y="1.5" width="10" height="8" fill="#dfe8f4" stroke="#3a5a8a"/><rect x="1.5" y="3.5" width="10" height="8" fill="#eef2f8" stroke="#3a5a8a"/><path d="M2 12.5 Q2 10.5 5 10.5 H8 Q10 10.5 10 12.5 Q10 14.5 8 14.5 H5 Q2 14.5 2 12.5 Z M7 12.5 Q7 10.5 10 10.5 H12 Q14.5 10.5 14.5 12.5 Q14.5 14.5 12 14.5 H10" fill="none" stroke="#3a5a8a" stroke-width="1.2"/></svg>
<div class="a" style="left:355px;top:281px;width:1px;height:19px;background:#a0a0a0"></div>
<svg class="a" style="left:364px;top:282px;" width="16" height="16" viewBox="0 0 16 16"><defs><linearGradient id="cb" x1="0" y1="0" x2="0" y2="1"><stop offset="0" stop-color="#a8b8f8"/><stop offset="0.5" stop-color="#a8e0d0"/><stop offset="1" stop-color="#f8b890"/></linearGradient></defs><rect x="4.5" y="1.5" width="7" height="13" fill="url(#cb)" stroke="#3a4a80"/></svg>
<svg class="a" style="left:385px;top:282px;" width="16" height="16" viewBox="0 0 16 16"><rect x="1.5" y="1.5" width="13" height="13" fill="#f4f4f8" stroke="#3a4a80"/><rect x="3" y="4" width="4" height="3" fill="#e05050"/><rect x="3" y="9" width="4" height="3" fill="#5060e0"/><path d="M9 5.5 H13 M9 10.5 H13" stroke="#000" stroke-width="1"/></svg>
<div class="a" style="left:409px;top:281px;width:1px;height:19px;background:#a0a0a0"></div>
<svg class="a" style="left:419px;top:282px;" width="16" height="16" viewBox="0 0 16 16"><rect x="2.5" y="3.5" width="11" height="10" fill="#9a9a9a" stroke="#888"/></svg>
<svg class="a" style="left:439px;top:282px;" width="16" height="16" viewBox="0 0 16 16"><rect x="1.5" y="2.5" width="13" height="11" fill="#fff" stroke="#3a4a80" stroke-width="1.2"/><rect x="1.5" y="2.5" width="13" height="2" fill="#3a4a80"/><path d="M3 5 V13 M13 5 V13" stroke="#3a4a80" stroke-width="1.5" stroke-dasharray="1 1"/></svg>
<div class="a" style="left:112px;top:337px;width:434px;height:343px;background:#fff"></div>
<svg class="a" style="left:112px;top:337px;overflow:visible" width="434" height="343" viewBox="0 0 434 343"><path d="M0.50 0 V4 M0.50 343 V339" stroke="#262626" stroke-width="1" shape-rendering="crispEdges"/><path d="M62.36 0 V4 M62.36 343 V339" stroke="#262626" stroke-width="1" shape-rendering="crispEdges"/><path d="M124.21 0 V4 M124.21 343 V339" stroke="#262626" stroke-width="1" shape-rendering="crispEdges"/><path d="M186.07 0 V4 M186.07 343 V339" stroke="#262626" stroke-width="1" shape-rendering="crispEdges"/><path d="M247.93 0 V4 M247.93 343 V339" stroke="#262626" stroke-width="1" shape-rendering="crispEdges"/><path d="M309.79 0 V4 M309.79 343 V339" stroke="#262626" stroke-width="1" shape-rendering="crispEdges"/><path d="M371.64 0 V4 M371.64 343 V339" stroke="#262626" stroke-width="1" shape-rendering="crispEdges"/><path d="M433.50 0 V4 M433.50 343 V339" stroke="#262626" stroke-width="1" shape-rendering="crispEdges"/><path d="M0 342.50 H4 M434 342.50 H430" stroke="#262626" stroke-width="1" shape-rendering="crispEdges"/><path d="M0 304.50 H4 M434 304.50 H430" stroke="#262626" stroke-width="1" shape-rendering="crispEdges"/><path d="M0 266.50 H4 M434 266.50 H430" stroke="#262626" stroke-width="1" shape-rendering="crispEdges"/><path d="M0 228.50 H4 M434 228.50 H430" stroke="#262626" stroke-width="1" shape-rendering="crispEdges"/><path d="M0 190.50 H4 M434 190.50 H430" stroke="#262626" stroke-width="1" shape-rendering="crispEdges"/><path d="M0 152.50 H4 M434 152.50 H430" stroke="#262626" stroke-width="1" shape-rendering="crispEdges"/><path d="M0 114.50 H4 M434 114.50 H430" stroke="#262626" stroke-width="1" shape-rendering="crispEdges"/><path d="M0 76.50 H4 M434 76.50 H430" stroke="#262626" stroke-width="1" shape-rendering="crispEdges"/><path d="M0 38.50 H4 M434 38.50 H430" stroke="#262626" stroke-width="1" shape-rendering="crispEdges"/><path d="M0 0.50 H4 M434 0.50 H430" stroke="#262626" stroke-width="1" shape-rendering="crispEdges"/><polyline points="0.50,342.50 6.71,338.67 12.93,334.83 19.14,330.96 25.36,327.08 31.57,323.17 37.79,319.25 44.00,315.30 50.22,311.34 56.43,307.35 62.64,303.35 68.86,299.32 75.07,295.28 81.29,291.21 87.50,287.13 93.72,283.02 99.93,278.90 106.14,274.75 112.36,270.58 118.57,266.39 124.79,262.18 131.00,257.95 137.22,253.70 143.43,249.42 149.65,245.13 155.86,240.81 162.07,236.47 168.29,232.11 174.50,227.72 180.72,223.32 186.93,218.89 193.15,214.44 199.36,209.97 205.58,205.48 211.79,200.96 218.00,196.42 224.22,191.85 230.43,187.27 236.65,182.66 242.86,178.03 249.08,173.37 255.29,168.69 261.50,163.99 267.72,159.26 273.93,154.51 280.15,149.74 286.36,144.94 292.58,140.12 298.79,135.27 305.01,130.40 311.22,125.51 317.43,120.59 323.65,115.64 329.86,110.67 336.08,105.68 342.29,100.66 348.51,95.61 354.72,90.54 360.94,85.45 367.15,80.33 373.36,75.18 379.58,70.01 385.79,64.81 392.01,59.58 398.22,54.33 404.44,49.05 410.65,43.75 416.86,38.41 423.08,33.05 429.29,27.67" fill="none" stroke="#0072bd" stroke-width="1" shape-rendering="crispEdges"/><rect x="0.5" y="0.5" width="433" height="342" fill="none" stroke="#262626" stroke-width="1"/></svg>
<div class="t" style="left:112.5px;top:688.1px;font-size:13.33px;color:#262626;font-family:'Liberation Sans';transform:translateX(-50%)">0</div>
<div class="t" style="left:174.4px;top:688.1px;font-size:13.33px;color:#262626;font-family:'Liberation Sans';transform:translateX(-50%)">0.05</div>
<div class="t" style="left:236.2px;top:688.1px;font-size:13.33px;color:#262626;font-family:'Liberation Sans';transform:translateX(-50%)">0.1</div>
<div class="t" style="left:298.1px;top:688.1px;font-size:13.33px;color:#262626;font-family:'Liberation Sans';transform:translateX(-50%)">0.15</div>
<div class="t" style="left:359.9px;top:688.1px;font-size:13.33px;color:#262626;font-family:'Liberation Sans';transform:translateX(-50%)">0.2</div>
<div class="t" style="left:421.8px;top:688.1px;font-size:13.33px;color:#262626;font-family:'Liberation Sans';transform:translateX(-50%)">0.25</div>
<div class="t" style="left:483.6px;top:688.1px;font-size:13.33px;color:#262626;font-family:'Liberation Sans';transform:translateX(-50%)">0.3</div>
<div class="t" style="left:545.5px;top:688.1px;font-size:13.33px;color:#262626;font-family:'Liberation Sans';transform:translateX(-50%)">0.35</div>
<div class="t" style="right:1750.3px;top:674.2px;font-size:13.33px;color:#262626">1</div>
<div class="t" style="right:1750.3px;top:636.2px;font-size:13.33px;color:#262626">1.05</div>
<div class="t" style="right:1750.3px;top:598.2px;font-size:13.33px;color:#262626">1.1</div>
<div class="t" style="right:1750.3px;top:560.2px;font-size:13.33px;color:#262626">1.15</div>
<div class="t" style="right:1750.3px;top:522.2px;font-size:13.33px;color:#262626">1.2</div>
<div class="t" style="right:1750.3px;top:484.2px;font-size:13.33px;color:#262626">1.25</div>
<div class="t" style="right:1750.3px;top:446.2px;font-size:13.33px;color:#262626">1.3</div>
<div class="t" style="right:1750.3px;top:408.2px;font-size:13.33px;color:#262626">1.35</div>
<div class="t" style="right:1750.3px;top:370.2px;font-size:13.33px;color:#262626">1.4</div>
<div class="t" style="right:1750.3px;top:332.2px;font-size:13.33px;color:#262626">1.45</div>
<div class="a" style="left:953px;top:0;width:50px;height:40px;border-radius:0 20px 20px 0;background:#031d28"></div>
<div class="a" style="left:933px;top:20px;width:40px;height:160px;border-radius:0 0 20px 20px;background:rgba(220,128,0,0.72)"></div>
<div class="a" style="left:933px;top:0;width:40px;height:40px;border-radius:20px 20px 0 20px;background:#8f1a3d"></div>
<svg class="a" style="left:983px;top:10px;" width="10" height="19" viewBox="0 0 10 19"><path d="M1 1 L8 9.5 L1 18" fill="none" stroke="#6c777c" stroke-width="2.4"/></svg>
<svg class="a" style="left:940px;top:8px;" width="25" height="20" viewBox="0 0 25 20"><path d="M8 4.5 V1.5 H17 V4.5" fill="none" stroke="#bcbcbc" stroke-width="2"/><path d="M0.5 7.5 L3 4 H22 L24.5 7.5 V12 H0.5 Z" fill="#bcbcbc"/><rect x="1.5" y="13" width="22" height="6.5" fill="#bcbcbc"/><rect x="10.5" y="8" width="4" height="8" fill="#8f1a3d"/><rect x="11.5" y="9" width="2" height="6" fill="#bcbcbc"/></svg>
<svg class="a" style="left:945px;top:47px;" width="18" height="24" viewBox="0 0 18 24"><path d="M1 1 H10.5 L17 7.5 V22.5 H1 Z M10.5 1 V7.5 H17" fill="none" stroke="rgba(200,200,200,0.85)" stroke-width="1.8" stroke-linejoin="miter"/><path d="M7 10 H11 V14 H14 L9 19 L4 14 H7 Z" fill="rgba(200,200,200,0.85)"/></svg>
<svg class="a" style="left:945px;top:89px;" width="18" height="24" viewBox="0 0 18 24"><path d="M1 1 H10.5 L17 7.5 V22.5 H1 Z M10.5 1 V7.5 H17" fill="none" stroke="rgba(240,240,240,0.9)" stroke-width="1.8" stroke-linejoin="miter"/><path d="M7 21 H11 V17 H14 L9 12 L4 17 H7 Z" fill="rgba(240,240,240,0.9)"/></svg>
<svg class="a" style="left:942px;top:126px;" width="22" height="25" viewBox="0 0 22 25"><path d="M6.5 4 H3.5 V21 H19 V4 H15.5" fill="none" stroke="rgba(245,245,245,0.92)" stroke-width="1.8"/><rect x="7.5" y="1" width="7" height="4.5" rx="1" fill="rgba(180,190,200,0.9)"/><path d="M7 9.5 H15 M7 12.5 H15 M7 15.5 H15" stroke="rgba(245,245,245,0.92)" stroke-width="1.5"/><path d="M0 22.5 H9 M6 19.5 L9 22.5 L6 25.5" stroke="rgba(245,245,245,0.92)" stroke-width="1.6" fill="none"/></svg>
</body></html>
